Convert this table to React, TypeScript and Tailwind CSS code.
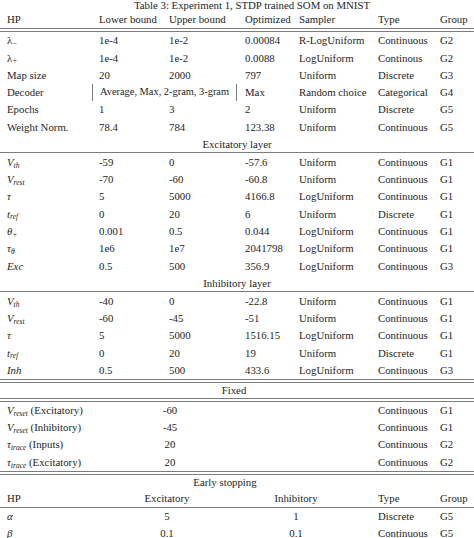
import React from "react";

type Row = [React.ReactNode, string, string, string, string, string, string];

const Sub = ({ children }: { children: React.ReactNode }) => (
  <sub className="text-[7.5px] italic">{children}</sub>
);

const I = ({ children }: { children: React.ReactNode }) => <span className="italic">{children}</span>;

const MAIN_GRID = "grid grid-cols-[92px_70px_76px_54px_79px_62px_1fr] pl-[7px] items-center h-[17.3px]";

const top: Row[] = [
  [<>λ<Sub>−</Sub></>, "1e-4", "1e-2", "0.00084", "R-LogUniform", "Continuous", "G2"],
  [<>λ<Sub>+</Sub></>, "1e-4", "1e-2", "0.0088", "LogUniform", "Continous", "G2"],
  ["Map size", "20", "2000", "797", "Uniform", "Discrete", "G3"],
  ["Decoder", "", "", "Max", "Random choice", "Categorical", "G4"],
  ["Epochs", "1", "3", "2", "Uniform", "Discrete", "G5"],
  ["Weight Norm.", "78.4", "784", "123.38", "Uniform", "Continuous", "G5"],
];

const excitatory: Row[] = [
  [<><I>V</I><Sub>th</Sub></>, "-59", "0", "-57.6", "Uniform", "Continuous", "G1"],
  [<><I>V</I><Sub>rest</Sub></>, "-70", "-60", "-60.8", "Uniform", "Continuous", "G1"],
  [<I>τ</I>, "5", "5000", "4166.8", "LogUniform", "Continuous", "G1"],
  [<><I>t</I><Sub>ref</Sub></>, "0", "20", "6", "Uniform", "Discrete", "G1"],
  [<><I>θ</I><Sub>+</Sub></>, "0.001", "0.5", "0.044", "LogUniform", "Continuous", "G1"],
  [<><I>τ</I><Sub>θ</Sub></>, "1e6", "1e7", "2041798", "LogUniform", "Continuous", "G1"],
  [<I>Exc</I>, "0.5", "500", "356.9", "LogUniform", "Continuous", "G3"],
];

const inhibitory: Row[] = [
  [<><I>V</I><Sub>th</Sub></>, "-40", "0", "-22.8", "Uniform", "Continuous", "G1"],
  [<><I>V</I><Sub>rest</Sub></>, "-60", "-45", "-51", "Uniform", "Continuous", "G1"],
  [<I>τ</I>, "5", "5000", "1516.15", "LogUniform", "Continuous", "G1"],
  [<><I>t</I><Sub>ref</Sub></>, "0", "20", "19", "Uniform", "Discrete", "G1"],
  [<I>Inh</I>, "0.5", "500", "433.6", "LogUniform", "Continuous", "G3"],
];

const fixed: [React.ReactNode, string, string, string][] = [
  [<><I>V</I><Sub>reset</Sub> (Excitatory)</>, "-60", "Continuous", "G1"],
  [<><I>V</I><Sub>reset</Sub> (Inhibitory)</>, "-45", "Continuous", "G1"],
  [<><I>τ</I><Sub>trace</Sub> (Inputs)</>, "20", "Continuous", "G2"],
  [<><I>τ</I><Sub>trace</Sub> (Excitatory)</>, "20", "Continuous", "G2"],
];

const early: [React.ReactNode, string, string, string, string][] = [
  [<I>α</I>, "5", "1", "Discrete", "G5"],
  [<I>β</I>, "0.1", "0.1", "Continuous", "G5"],
];

const DoubleRule = () => <div className="h-[4px] border-y border-[#7c7c7c]" />;
const Rule = () => <div className="h-px bg-[#7c7c7c]" />;

const Rows = ({ rows }: { rows: Row[] }) => (
  <>
    {rows.map((r, i) => (
      <div key={i} className={MAIN_GRID}>
        <div>{r[0]}</div>
        {r[0] === "Decoder" ? (
          <div className="col-span-2 -ml-[7px] w-[145px] h-full flex items-center pl-[7px] border-x border-[#7c7c7c] whitespace-nowrap text-[10.4px]">
            Average, Max, 2-gram, 3-gram
          </div>
        ) : (
          <>
            <div>{r[1]}</div>
            <div>{r[2]}</div>
          </>
        )}
        <div>{r[3]}</div>
        <div>{r[4]}</div>
        <div>{r[5]}</div>
        <div>{r[6]}</div>
      </div>
    ))}
  </>
);

const SectionTitle = ({ children, className }: { children: React.ReactNode; className: string }) => (
  <div className={`flex items-center justify-center ${className}`}>{children}</div>
);

export default function App() {
  return (
    <div className="w-[474px] h-[538px] overflow-hidden bg-white text-[#1e1e1e] text-[10.8px] leading-none font-['Liberation_Serif',serif]">
      <div className="h-[11px] pl-[30px] flex items-center justify-center whitespace-nowrap">
        Table 3: Experiment 1, STDP trained SOM on MNIST
      </div>
      <div className={`${MAIN_GRID} h-[17px]`}>
        <div>HP</div>
        <div>Lower bound</div>
        <div>Upper bound</div>
        <div>Optimized</div>
        <div>Sampler</div>
        <div>Type</div>
        <div>Group</div>
      </div>
      <DoubleRule />
      <Rows rows={top} />

      <SectionTitle className="h-[16.7px]">Excitatory layer</SectionTitle>
      <Rule />
      <Rows rows={excitatory} />

      <SectionTitle className="h-[16.9px]">Inhibitory layer</SectionTitle>
      <Rule />
      <Rows rows={inhibitory} />

      <DoubleRule />
      <SectionTitle className="h-[15px] pr-[6px]">Fixed</SectionTitle>
      <DoubleRule />
      {fixed.map((r, i) => (
        <div key={i} className="grid grid-cols-[133px_60px_178px_62px_1fr] pl-[7px] items-center h-[17.2px]">
          <div className="whitespace-nowrap">{r[0]}</div>
          <div className="text-center">{r[1]}</div>
          <div />
          <div>{r[2]}</div>
          <div>{r[3]}</div>
        </div>
      ))}

      <DoubleRule />
      <SectionTitle className="h-[15px] pr-[24px]">Early stopping</SectionTitle>
      <div className="grid grid-cols-[113px_94px_164px_62px_1fr] pl-[7px] items-center h-[17px]">
        <div>HP</div>
        <div className="text-center">Excitatory</div>
        <div className="text-center">Inhibitory</div>
        <div>Type</div>
        <div>Group</div>
      </div>
      <Rule />
      {early.map((r, i) => (
        <div key={i} className="grid grid-cols-[113px_94px_164px_62px_1fr] pl-[7px] items-center h-[17.3px]">
          <div>{r[0]}</div>
          <div className="text-center">{r[1]}</div>
          <div className="text-center">{r[2]}</div>
          <div>{r[3]}</div>
          <div>{r[4]}</div>
        </div>
      ))}
    </div>
  );
}
